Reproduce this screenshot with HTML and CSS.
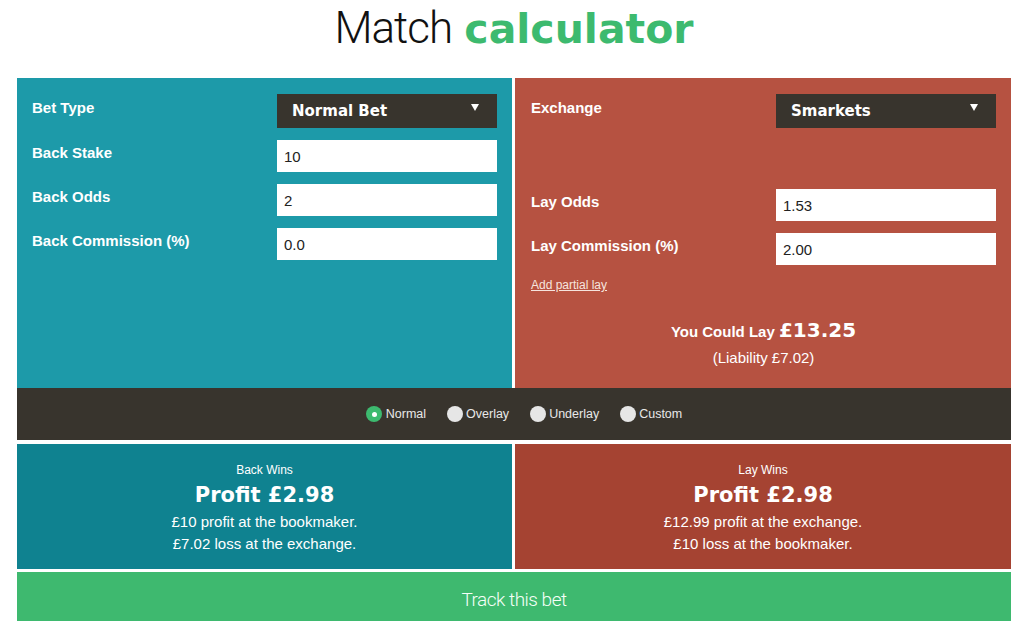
FILE: index.html
```html
<!DOCTYPE html>
<html lang="en">
<head>
<meta charset="utf-8">
<title>Match calculator</title>
<link rel="stylesheet" href="styles.css">
</head>
<body>
<header class="title"><span class="t-light">Match</span> <span class="t-bold">calculator</span></header>
<main class="calc">
  <section class="top">
    <div class="panel panel-back">
      <div class="row row-select">
        <label class="lbl">Bet Type</label>
        <div class="select"><span>Normal Bet</span><i class="arrow"></i></div>
      </div>
      <div class="row">
        <label class="lbl">Back Stake</label>
        <input class="inp" type="text" value="10">
      </div>
      <div class="row">
        <label class="lbl">Back Odds</label>
        <input class="inp" type="text" value="2">
      </div>
      <div class="row">
        <label class="lbl">Back Commission (%)</label>
        <input class="inp" type="text" value="0.0">
      </div>
    </div>
    <div class="panel panel-lay">
      <div class="row row-select">
        <label class="lbl">Exchange</label>
        <div class="select"><span>Smarkets</span><i class="arrow"></i></div>
      </div>
      <div class="row row-gap">
        <label class="lbl">Lay Odds</label>
        <input class="inp" type="text" value="1.53">
      </div>
      <div class="row">
        <label class="lbl">Lay Commission (%)</label>
        <input class="inp" type="text" value="2.00">
      </div>
      <a class="partial" href="#">Add partial lay</a>
      <div class="could">You Could Lay <span class="amt">£13.25</span></div>
      <div class="liab">(Liability £7.02)</div>
    </div>
  </section>
  <section class="bar">
    <label class="radio"><span class="dot on"></span>Normal</label>
    <label class="radio"><span class="dot"></span>Overlay</label>
    <label class="radio"><span class="dot"></span>Underlay</label>
    <label class="radio"><span class="dot"></span>Custom</label>
  </section>
  <section class="results">
    <div class="res res-back">
      <div class="res-head">Back Wins</div>
      <div class="profit">Profit £2.98</div>
      <div class="res-line">£10 profit at the bookmaker.</div>
      <div class="res-line">£7.02 loss at the exchange.</div>
    </div>
    <div class="res res-lay">
      <div class="res-head">Lay Wins</div>
      <div class="profit">Profit £2.98</div>
      <div class="res-line">£12.99 profit at the exchange.</div>
      <div class="res-line">£10 loss at the bookmaker.</div>
    </div>
  </section>
  <button class="track">Track this bet</button>
</main>
</body>
</html>
```
FILE: styles.css
```css
* { box-sizing: border-box; }
html, body { margin: 0; padding: 0; background: #fff; }
body {
  font-family: "Liberation Sans", Arial, sans-serif;
  color: #fff;
  overflow: hidden;
}
.title {
  height: 78px;
  text-align: center;
  font-size: 44px;
  line-height: 56px;
  padding-top: 0;
  padding-left: 4px;
  color: #111;
}
.t-light {
  font-family: Roboto, "Liberation Sans", sans-serif;
  font-weight: 300;
  letter-spacing: -1px;
}
.t-bold {
  font-family: "DejaVu Sans", sans-serif;
  font-weight: 700;
  font-size: 41px;
  color: #3dba6f;
}
.calc {
  margin: 0 13px 0 17px;
}
.top {
  display: grid;
  grid-template-columns: 495px 1fr;
  column-gap: 3px;
  height: 310px;
}
.panel {
  display: flex;
  flex-direction: column;
  padding: 16px 15px 0 16px;
}
.panel-back { background: #1d9aa9; padding-left: 15px; }
.panel-lay { background: #b65241; }
.row {
  display: flex;
  justify-content: space-between;
  align-items: flex-start;
  height: 32px;
  margin-bottom: 12px;
}
.row-select { height: 34px; }
.row-gap { margin-top: 49px; }
.lbl {
  font-weight: 700;
  font-size: 15px;
  line-height: 18px;
  padding-top: 4px;
}
.row-select .lbl { padding-top: 5px; }
.select {
  width: 220px;
  height: 34px;
  background: #38342d;
  display: flex;
  align-items: center;
  justify-content: space-between;
  padding: 0 18px 0 15px;
  font-family: "DejaVu Sans", sans-serif;
  font-weight: 700;
  font-size: 15px;
}
.arrow {
  align-self: flex-start;
  margin-top: 10px;
  width: 0;
  height: 0;
  border-left: 4px solid transparent;
  border-right: 4px solid transparent;
  border-top: 7px solid #fff;
}
.inp {
  width: 220px;
  height: 32px;
  border: 0;
  outline: 0;
  margin: 0;
  padding: 0 7px;
  font-family: "Liberation Sans", Arial, sans-serif;
  font-size: 15px;
  color: #222;
  background: #fff;
}
.partial {
  margin-top: 1px;
  font-size: 12px;
  line-height: 14px;
  color: #f6e4de;
  text-decoration: underline;
  align-self: flex-start;
}
.could {
  margin-top: 26px;
  text-align: center;
  font-weight: 700;
  font-size: 15px;
  line-height: 24px;
}
.amt {
  font-family: "DejaVu Sans", sans-serif;
  font-size: 20px;
  font-weight: 700;
}
.liab {
  margin-top: 4px;
  text-align: center;
  font-size: 15px;
  line-height: 20px;
}
.bar {
  height: 52px;
  background: #38342d;
  display: flex;
  justify-content: center;
  align-items: center;
  font-size: 12.5px;
  color: #e8e8e8;
}
.radio {
  display: flex;
  align-items: center;
  margin-left: 20.5px;
}
.dot {
  width: 16px;
  height: 16px;
  border-radius: 50%;
  background: #e6e6e6;
  margin-right: 3.5px;
  display: flex;
  align-items: center;
  justify-content: center;
}
.dot.on { background: #3dba6f; }
.dot.on::after {
  content: "";
  width: 5px;
  height: 5px;
  border-radius: 50%;
  background: #fff;
}
.results {
  margin-top: 4px;
  display: grid;
  grid-template-columns: 495px 1fr;
  column-gap: 3px;
  height: 125px;
}
.res {
  text-align: center;
  padding-top: 18px;
}
.res-back { background: #0f8290; }
.res-lay { background: #a54332; }
.res-head {
  font-size: 12px;
  line-height: 16px;
}
.profit {
  margin-top: 1px;
  font-family: "DejaVu Sans", sans-serif;
  font-weight: 700;
  font-size: 21px;
  line-height: 32px;
}
.res-line {
  font-size: 15px;
  line-height: 21.5px;
}
.track {
  display: block;
  width: 100%;
  margin-top: 3px;
  height: 54px;
  border: 0;
  background: #3eb96f;
  color: #f4fff7;
  font-family: Roboto, "Liberation Sans", sans-serif;
  font-weight: 300;
  font-size: 19px;
  letter-spacing: -0.5px;
  padding: 0;
}
```
